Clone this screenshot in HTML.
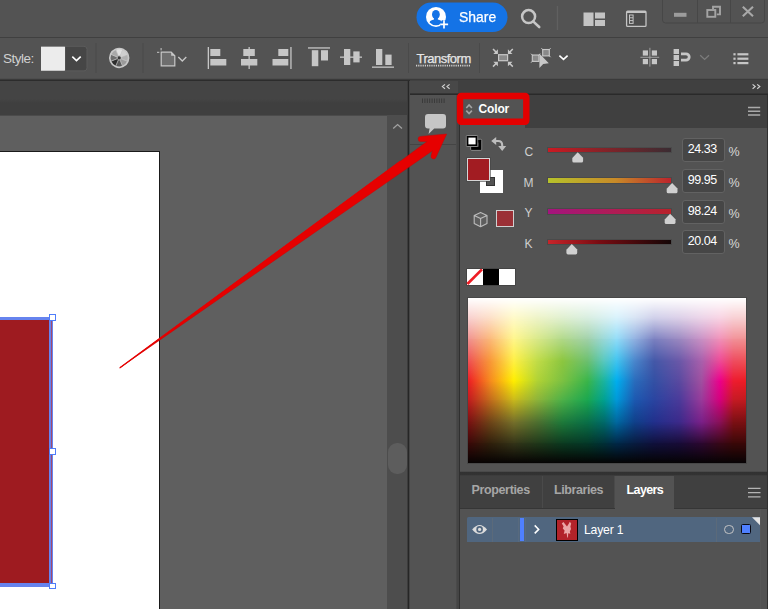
<!DOCTYPE html>
<html><head><meta charset="utf-8">
<style>
html,body{margin:0;padding:0;}
body{width:768px;height:609px;overflow:hidden;background:#535353;position:relative;font-family:"Liberation Sans",sans-serif;}
.a{position:absolute;}
.t{position:absolute;white-space:nowrap;line-height:1;}
svg{position:absolute;left:0;top:0;overflow:visible;}

.vb{left:682px;width:43px;height:24px;box-sizing:border-box;background:#464646;border:1px solid #626262;border-radius:3px;color:#fff;font-size:12.5px;letter-spacing:-.45px;line-height:21.2px;text-align:left;padding-left:4.7px;}
.pc{left:728.5px;font-size:12.5px;color:#d8d8d8;}
.hd{left:49px;width:7px;height:6.6px;box-sizing:border-box;background:#fff;border:1px solid #4f7dfa;}
</style></head><body>
<!-- top bars -->
<div class="a" style="left:0;top:0;width:768px;height:37px;background:#535353"></div>
<div class="a" style="left:0;top:37px;width:768px;height:1px;background:#404040"></div>
<div class="a" style="left:0;top:38px;width:768px;height:41px;background:#535353"></div>
<div class="a" style="left:0;top:78px;width:768px;height:3px;background:linear-gradient(180deg,#4d4d4d 0,#4d4d4d 1px,#3a3a3a 1px,#3a3a3a 2px,#2c2c2c 2px)"></div>
<!-- doc tab strip -->
<div class="a" style="left:0;top:81px;width:408px;height:34px;background:linear-gradient(180deg,#444 0,#444 18px,#3f3f3f 22px,#3f3f3f 100%)"></div>
<!-- canvas -->
<div class="a" style="left:0;top:115px;width:387px;height:2px;background:#4b4b4b"></div>
<div class="a" style="left:0;top:116.2px;width:387px;height:494px;background:#5f5f5f"></div>
<div class="a" style="left:0;top:151px;width:159px;height:458px;background:#fff;border-top:1px solid #1a1a1a;border-right:1px solid #1a1a1a;box-sizing:content-box"></div>
<div class="a" style="left:0;top:316.5px;width:53.2px;height:270.2px;background:#6683ee"></div>
<div class="a" style="left:0;top:320px;width:48.8px;height:263.2px;background:#9e1b20"></div>
<div class="a" style="left:51.3px;top:320px;width:.8px;height:263.2px;background:#a04a70"></div>
<div class="a hd" style="top:314px"></div>
<div class="a hd" style="top:448.2px"></div>
<div class="a hd" style="top:582.8px"></div>
<!-- scrollbar -->
<div class="a" style="left:387px;top:115px;width:21px;height:494px;background:#4d4d4d"></div>
<div class="a" style="left:388px;top:443px;width:18.5px;height:31px;border-radius:9px;background:#5d5d5d"></div>
<!-- separator -->
<div class="a" style="left:407px;top:81px;width:4px;height:528px;background:linear-gradient(90deg,#3c3c3c 0,#3c3c3c 1px,#262626 1px,#262626 2px,#444 2px,#444 3px,#4d4d4d 3px)"></div>
<!-- dock header -->
<div class="a" style="left:410px;top:80px;width:358px;height:13px;background:#404040"></div>
<div class="a" style="left:410px;top:80.5px;width:47.5px;height:12.5px;background:#484848"></div>
<div class="a" style="left:410px;top:93px;width:358px;height:2px;background:linear-gradient(180deg,#353535 0,#353535 1px,#2a2a2a 1px)"></div>
<!-- icon column -->
<div class="a" style="left:410px;top:95px;width:48px;height:514px;background:#535353"></div>
<div class="a" style="left:410px;top:144px;width:48px;height:1px;background:#454545"></div>
<div class="a" style="left:456px;top:95px;width:4px;height:514px;background:linear-gradient(90deg,#4a4a4a 0,#4a4a4a 1px,#454545 1px,#454545 3px,#303030 3px)"></div>
<!-- color panel -->
<div class="a" style="left:460px;top:95px;width:308px;height:32.6px;background:#404040"></div>
<div class="a" style="left:460px;top:128px;width:308px;height:343px;background:#535353"></div>
<div class="a" style="left:460px;top:96px;width:65px;height:32px;background:#535353"></div>
<div class="a" style="left:460px;top:471px;width:308px;height:5px;background:linear-gradient(180deg,#4a4a4a 0,#4a4a4a 1px,#313131 1px,#333 4px,#3c3c3c 4px)"></div>
<!-- layers panel -->
<div class="a" style="left:460px;top:476px;width:308px;height:32px;background:#404040"></div>
<div class="a" style="left:460px;top:508px;width:308px;height:1px;background:#363636"></div>
<div class="a" style="left:460px;top:509px;width:308px;height:100px;background:#535353"></div>
<div class="a" style="left:615px;top:476px;width:58.5px;height:33px;background:#535353"></div>
<div class="a" style="left:542px;top:476px;width:1px;height:32px;background:#4a4a4a"></div>
<div class="a" style="left:614px;top:476px;width:1px;height:32px;background:#4a4a4a"></div>
<div class="a" style="left:767px;top:95px;width:1px;height:514px;background:#303030"></div>
<!-- layer row -->
<div class="a" style="left:466.6px;top:516.8px;width:293.2px;height:24.8px;background:#50667f;border-radius:1.5px 0 0 0"></div>
<div class="a" style="left:492px;top:518px;width:1px;height:23.5px;background:#5b6a7a"></div>
<div class="a" style="left:518px;top:518px;width:1px;height:23.5px;background:#586a7e"></div>
<div class="a" style="left:525px;top:518px;width:1px;height:23.5px;background:#586a7e"></div>
<div class="a" style="left:716px;top:518px;width:1px;height:23.5px;background:#5b6a7a"></div>
<div class="a" style="left:520px;top:518px;width:4.4px;height:23px;background:#4f80ff"></div>
<div class="a" style="left:556px;top:519px;width:20px;height:20px;background:#b2232a;border:1px solid #000"></div>
<div class="a" style="left:741.4px;top:524.4px;width:8px;height:8px;background:#4f80ff;border:1px solid #0a0a14;border-radius:1.5px"></div>
<div class="a" style="left:724.4px;top:524.5px;width:7.4px;height:7.4px;border:1.5px solid #c4c4c4;border-radius:50%"></div>
<div class="a" style="left:760px;top:509px;width:1px;height:100px;background:#575757"></div>


<!-- color panel contents -->
<div class="a" style="left:479.5px;top:170px;width:23px;height:23.2px;background:#fff"></div>
<div class="a" style="left:486.2px;top:177px;width:9.2px;height:9.4px;background:#535353;border:1px solid #333;box-sizing:border-box"></div>
<div class="a" style="left:466.8px;top:157.8px;width:23.4px;height:23.2px;background:#a21c22;border:1px solid #d6d6d6;box-sizing:border-box;box-shadow:0 0 0 .6px #444"></div>
<div class="a" style="left:496.3px;top:209.9px;width:17.3px;height:17.5px;background:#9b3036;border:1px solid #d0d0d0;box-sizing:border-box"></div>
<!-- none/black/white -->
<div class="a" style="left:466.5px;top:268.7px;width:48.6px;height:15.9px;background:#fff;box-shadow:0 0 0 .6px #3a3a3a"></div>
<div class="a" style="left:482.6px;top:268.7px;width:16.4px;height:15.9px;background:#000"></div>

<!-- sliders -->
<div class="a" style="left:547.6px;top:147.8px;width:123.7px;height:4.7px;background:linear-gradient(90deg,#cc1a22,#8a2228 42%,#3a2c32);box-shadow:0 0 0 1px #4a4a4a"></div>
<div class="a" style="left:547.6px;top:178.3px;width:123.7px;height:4.7px;background:linear-gradient(90deg,#b6c22a,#c88a28 55%,#bc242c);box-shadow:0 0 0 1px #4a4a4a"></div>
<div class="a" style="left:547.6px;top:209px;width:123.7px;height:4.7px;background:linear-gradient(90deg,#a4147e,#b01c54 55%,#b8222a);box-shadow:0 0 0 1px #4a4a4a"></div>
<div class="a" style="left:547.6px;top:239.7px;width:123.7px;height:4.7px;background:linear-gradient(90deg,#c8242a,#780c12 42%,#140606);box-shadow:0 0 0 1px #4a4a4a"></div>
<!-- value boxes -->
<div class="a vb" style="top:138px">24.33</div>
<div class="a vb" style="top:169px">99.95</div>
<div class="a vb" style="top:200px">98.24</div>
<div class="a vb" style="top:230px">20.04</div>
<div class="t pc" style="top:146px">%</div>
<div class="t pc" style="top:177px">%</div>
<div class="t pc" style="top:207.5px">%</div>
<div class="t pc" style="top:238px">%</div>
<!-- spectrum -->
<div class="a" style="left:467px;top:297px;width:280px;height:167px;background:#474747"></div>
<div class="a" id="spec" style="left:468px;top:298px;width:278px;height:165px;overflow:hidden;background:#000">
<div class="a" style="left:0;top:0.00px;width:278px;height:20.30px;background:linear-gradient(90deg,#fff,#fff)"><div class="a" style="left:0;top:0;width:278px;height:100%;background:linear-gradient(90deg,#f8d0d0 0%,#fde0c8 8%,#fffac8 16.5%,#eef4c8 25%,#e0f0d0 34%,#d8eee0 43%,#d8f0f0 49%,#d8f2fc 53.5%,#d8e4f4 60%,#d0d0ea 67%,#dcd0e8 76%,#ecd4e8 84%,#f8d4e4 90.6%,#f8d0d4 95.5%,#f8d0d0 100%);-webkit-mask-image:linear-gradient(180deg,rgba(0,0,0,0),#000);mask-image:linear-gradient(180deg,rgba(0,0,0,0),#000)"></div></div>
<div class="a" style="left:0;top:19.80px;width:278px;height:21.95px;background:linear-gradient(90deg,#f8d0d0 0%,#fde0c8 8%,#fffac8 16.5%,#eef4c8 25%,#e0f0d0 34%,#d8eee0 43%,#d8f0f0 49%,#d8f2fc 53.5%,#d8e4f4 60%,#d0d0ea 67%,#dcd0e8 76%,#ecd4e8 84%,#f8d4e4 90.6%,#f8d0d4 95.5%,#f8d0d0 100%)"><div class="a" style="left:0;top:0;width:278px;height:100%;background:linear-gradient(90deg,#f09090 0%,#fbb878 8%,#fff68a 16.5%,#d8e888 25%,#b0d888 34%,#a0d0a8 43%,#98d8d8 49%,#90dcf8 53.5%,#90b0e0 60%,#7a80c0 67%,#9a88c0 76%,#c890c4 84%,#f090b8 90.6%,#f29098 95.5%,#f09090 100%);-webkit-mask-image:linear-gradient(180deg,rgba(0,0,0,0),#000);mask-image:linear-gradient(180deg,rgba(0,0,0,0),#000)"></div></div>
<div class="a" style="left:0;top:41.25px;width:278px;height:21.95px;background:linear-gradient(90deg,#f09090 0%,#fbb878 8%,#fff68a 16.5%,#d8e888 25%,#b0d888 34%,#a0d0a8 43%,#98d8d8 49%,#90dcf8 53.5%,#90b0e0 60%,#7a80c0 67%,#9a88c0 76%,#c890c4 84%,#f090b8 90.6%,#f29098 95.5%,#f09090 100%)"><div class="a" style="left:0;top:0;width:278px;height:100%;background:linear-gradient(90deg,#ee5055 0%,#f89838 8%,#fff044 16.5%,#c0dc48 25%,#8cc63f 34%,#6cc070 43%,#58c8c0 49%,#40c4f0 53.5%,#4a86cc 60%,#4458a8 67%,#6a58a8 76%,#a860ac 84%,#ee4a98 90.6%,#ee4c60 95.5%,#ee5055 100%);-webkit-mask-image:linear-gradient(180deg,rgba(0,0,0,0),#000);mask-image:linear-gradient(180deg,rgba(0,0,0,0),#000)"></div></div>
<div class="a" style="left:0;top:62.70px;width:278px;height:20.30px;background:linear-gradient(90deg,#ee5055 0%,#f89838 8%,#fff044 16.5%,#c0dc48 25%,#8cc63f 34%,#6cc070 43%,#58c8c0 49%,#40c4f0 53.5%,#4a86cc 60%,#4458a8 67%,#6a58a8 76%,#a860ac 84%,#ee4a98 90.6%,#ee4c60 95.5%,#ee5055 100%)"><div class="a" style="left:0;top:0;width:278px;height:100%;background:linear-gradient(90deg,#ed1c24 0%,#f68a1e 8%,#ffee00 16.5%,#b0d235 25%,#7cc142 34%,#3ab54a 43%,#1ab4a0 49%,#00aeef 53.5%,#2a6cbc 60%,#3450a4 67%,#5a4aa0 76%,#a050a0 84%,#ec008c 90.6%,#ed1c30 95.5%,#ed1c24 100%);-webkit-mask-image:linear-gradient(180deg,rgba(0,0,0,0),#000);mask-image:linear-gradient(180deg,rgba(0,0,0,0),#000)"></div></div>
<div class="a" style="left:0;top:82.50px;width:278px;height:20.30px;background:linear-gradient(90deg,#ed1c24 0%,#f68a1e 8%,#ffee00 16.5%,#b0d235 25%,#7cc142 34%,#3ab54a 43%,#1ab4a0 49%,#00aeef 53.5%,#2a6cbc 60%,#3450a4 67%,#5a4aa0 76%,#a050a0 84%,#ec008c 90.6%,#ed1c30 95.5%,#ed1c24 100%)"><div class="a" style="left:0;top:0;width:278px;height:100%;background:linear-gradient(90deg,#c01a1e 0%,#c06a1c 8%,#c8b81c 16.5%,#8cb23a 25%,#4cb048 34%,#1aa650 43%,#00a090 49%,#0098d8 53.5%,#1c58b0 60%,#2a44a0 67%,#4a3a9a 76%,#983a9a 84%,#d4007c 90.6%,#c41a24 95.5%,#c01a1e 100%);-webkit-mask-image:linear-gradient(180deg,rgba(0,0,0,0),#000);mask-image:linear-gradient(180deg,rgba(0,0,0,0),#000)"></div></div>
<div class="a" style="left:0;top:102.30px;width:278px;height:21.95px;background:linear-gradient(90deg,#c01a1e 0%,#c06a1c 8%,#c8b81c 16.5%,#8cb23a 25%,#4cb048 34%,#1aa650 43%,#00a090 49%,#0098d8 53.5%,#1c58b0 60%,#2a44a0 67%,#4a3a9a 76%,#983a9a 84%,#d4007c 90.6%,#c41a24 95.5%,#c01a1e 100%)"><div class="a" style="left:0;top:0;width:278px;height:100%;background:linear-gradient(90deg,#7a1012 0%,#6e4418 8%,#76702a 16.5%,#4e7030 25%,#1e7a3a 34%,#0a7048 43%,#006a6a 49%,#0068a0 53.5%,#10408a 60%,#22308c 67%,#3c2a8a 76%,#7a2088 84%,#8a1058 90.6%,#7c1014 95.5%,#7a1012 100%);-webkit-mask-image:linear-gradient(180deg,rgba(0,0,0,0),#000);mask-image:linear-gradient(180deg,rgba(0,0,0,0),#000)"></div></div>
<div class="a" style="left:0;top:123.75px;width:278px;height:21.95px;background:linear-gradient(90deg,#7a1012 0%,#6e4418 8%,#76702a 16.5%,#4e7030 25%,#1e7a3a 34%,#0a7048 43%,#006a6a 49%,#0068a0 53.5%,#10408a 60%,#22308c 67%,#3c2a8a 76%,#7a2088 84%,#8a1058 90.6%,#7c1014 95.5%,#7a1012 100%)"><div class="a" style="left:0;top:0;width:278px;height:100%;background:linear-gradient(90deg,#3a0808 0%,#30200c 8%,#343418 16.5%,#20381a 25%,#0c3a20 34%,#043828 43%,#003038 49%,#002848 53.5%,#081c40 60%,#10103c 67%,#180c38 76%,#2c0830 84%,#380818 90.6%,#3a0808 95.5%,#3a0808 100%);-webkit-mask-image:linear-gradient(180deg,rgba(0,0,0,0),#000);mask-image:linear-gradient(180deg,rgba(0,0,0,0),#000)"></div></div>
<div class="a" style="left:0;top:145.20px;width:278px;height:20.30px;background:linear-gradient(90deg,#3a0808 0%,#30200c 8%,#343418 16.5%,#20381a 25%,#0c3a20 34%,#043828 43%,#003038 49%,#002848 53.5%,#081c40 60%,#10103c 67%,#180c38 76%,#2c0830 84%,#380818 90.6%,#3a0808 95.5%,#3a0808 100%)"><div class="a" style="left:0;top:0;width:278px;height:100%;background:linear-gradient(90deg,#070303,#040404 50%,#070305);-webkit-mask-image:linear-gradient(180deg,rgba(0,0,0,0),#000);mask-image:linear-gradient(180deg,rgba(0,0,0,0),#000)"></div></div>
</div>

<!-- ICONS -->
<svg width="768" height="609" viewBox="0 0 768 609" style="z-index:4">
<!-- share button -->
<rect x="416.5" y="2.5" width="91" height="29.5" rx="14.75" fill="#1473e6"/>
<circle cx="436" cy="16.9" r="10" fill="#fff"/>
<ellipse cx="435.9" cy="14.5" rx="3.9" ry="4.6" fill="#1473e6"/>
<path d="M429.6 22.6 C429.8 20.8 432 20.2 434 19.6 V17.5 H437.8 V19.6 C439.8 20.2 442 20.8 442.2 22.6 A8.7 8.7 0 0 1 429.6 22.6 Z" fill="#1473e6"/>
<path d="M440.2 24.4 H448.1 M444 20.2 V28.6" stroke="#1473e6" stroke-width="4.6" fill="none"/>
<path d="M440.2 24.4 H448.1 M444 20.2 V28.6" stroke="#fff" stroke-width="1.7" fill="none"/>
<!-- search -->
<circle cx="528.6" cy="16.6" r="6.5" fill="none" stroke="#c6c6c6" stroke-width="2.5"/>
<path d="M533.4 21.6 L539.2 27" stroke="#c6c6c6" stroke-width="2.6" stroke-linecap="round"/>
<rect x="556.8" y="6" width="1.3" height="24" fill="#606060"/>
<!-- workspace icon -->
<rect x="583.5" y="12.5" width="10" height="13.5" fill="#c4c4c4"/>
<rect x="595" y="12.5" width="10" height="6" fill="#c4c4c4"/>
<rect x="595" y="20" width="10" height="6" fill="#c4c4c4"/>
<!-- window icon -->
<rect x="626.6" y="11.2" width="19.4" height="15.2" rx="1" fill="#4d4d4d" stroke="#c4c4c4" stroke-width="1.3"/>
<rect x="627" y="11" width="19" height="2" fill="#c4c4c4"/>
<rect x="629.5" y="15" width="3.6" height="8.4" fill="none" stroke="#c4c4c4" stroke-width="1"/>
<path d="M629.5 17.8 H633 M629.5 20.6 H633" stroke="#c4c4c4" stroke-width="1"/>
<!-- window controls -->
<rect x="662.5" y="-5" width="102" height="28" rx="3" fill="none" stroke="#474747" stroke-width="1"/>
<path d="M697.5 0 V23 M730.5 0 V23" stroke="#474747" stroke-width="1"/>
<rect x="674" y="12.8" width="12.5" height="4" fill="#9c9c9c"/>
<path d="M713 9.2 V6.8 H720 V14.4 H716.8" fill="none" stroke="#a4a4a4" stroke-width="1.9"/>
<rect x="707.3" y="10" width="8" height="6.8" fill="none" stroke="#a4a4a4" stroke-width="1.9"/>
<path d="M742.8 6.8 L753 16.2 M753 6.8 L742.8 16.2" stroke="#a8a8a8" stroke-width="2.1" fill="none"/>

<!-- control bar: style -->
<rect x="41" y="46.8" width="24" height="23.7" fill="#ececec"/>
<path d="M65 46.3 H84 Q87 46.3 87 49.3 V67.9 Q87 70.9 84 70.9 H65 Z" fill="#464646" stroke="#5c5c5c" stroke-width="1"/>
<rect x="41" y="46.8" width="24" height="23.7" fill="#ececec"/>
<path d="M72.3 56.6 L76.5 60.6 L80.7 56.6" fill="none" stroke="#fff" stroke-width="1.6"/>
<rect x="95.5" y="43" width="1" height="30" fill="#4a4a4a"/>
<rect x="142.5" y="43" width="1" height="30" fill="#4a4a4a"/>
<rect x="408" y="43" width="1" height="30" fill="#4a4a4a"/>
<rect x="479" y="43" width="1" height="30" fill="#4a4a4a"/>
<!-- color wheel -->
<g transform="translate(119.2 57.9) rotate(-22)">
<circle r="9.4" fill="#8a8a8a"/>
<path d="M0 0 L0 -9.4 A9.4 9.4 0 0 1 6.6 -6.6 Z" fill="#e0e0e0"/>
<path d="M0 0 L6.6 -6.6 A9.4 9.4 0 0 1 9.4 0 Z" fill="#cfcfcf"/>
<path d="M0 0 L9.4 0 A9.4 9.4 0 0 1 6.6 6.6 Z" fill="#b0b0b0"/>
<path d="M0 0 L6.6 6.6 A9.4 9.4 0 0 1 0 9.4 Z" fill="#9a9a9a"/>
<path d="M0 0 L0 9.4 A9.4 9.4 0 0 1 -6.6 6.6 Z" fill="#5a5a5a"/>
<path d="M0 0 L-6.6 6.6 A9.4 9.4 0 0 1 -9.4 0 Z" fill="#2e2e2e"/>
<path d="M0 0 L-9.4 0 A9.4 9.4 0 0 1 -6.6 -6.6 Z" fill="#6e6e6e"/>
<path d="M0 0 L-6.6 -6.6 A9.4 9.4 0 0 1 0 -9.4 Z" fill="#a8a8a8"/>
<path d="M0 -9.4 V9.4 M-9.4 0 H9.4 M-6.6 -6.6 L6.6 6.6 M6.6 -6.6 L-6.6 6.6" stroke="#d0d0d0" stroke-width=".6"/>
<circle r="9.4" fill="none" stroke="#c8c8c8" stroke-width="1.6"/>
<circle r="2" fill="#3a3a3a" stroke="#d0d0d0" stroke-width=".6"/>
</g>
<!-- artboard doc icon -->
<path d="M161.2 52.2 H171.2 L174.8 55.8 V65.8 H161.2 Z" fill="#6e6e6e" stroke="#c8c8c8" stroke-width="1.2"/>
<path d="M171.2 52.2 V55.8 H174.8 Z" fill="#c8c8c8"/>
<path d="M157 52.3 H159.3 M161.1 48 V50.4" stroke="#c8c8c8" stroke-width="1"/>
<path d="M178.3 57 L182.3 61 L186.3 57" fill="none" stroke="#c8c8c8" stroke-width="1.3"/>
<!-- align icons -->
<g fill="#c6c6c6">
<rect x="207.7" y="47" width="1.3" height="22"/><rect x="210.3" y="49" width="10" height="7"/><rect x="210.3" y="59" width="16" height="6.5"/>
<rect x="248.5" y="47" width="1.3" height="22"/><rect x="243.3" y="49" width="11.5" height="7"/><rect x="241" y="59" width="16.3" height="6.5"/>
<rect x="290.3" y="47" width="1.3" height="22"/><rect x="278.3" y="49" width="10" height="7"/><rect x="272.5" y="59" width="15.8" height="6.5"/>
<rect x="308" y="47.3" width="22" height="1.3"/><rect x="311.8" y="50.2" width="6.5" height="16"/><rect x="321" y="50.2" width="7" height="10.3"/>
<rect x="340" y="56.5" width="22" height="1.3"/><rect x="344" y="49" width="6.3" height="16"/><rect x="353.3" y="51.4" width="6.3" height="11"/>
<rect x="372" y="66.5" width="22" height="1.3"/><rect x="376" y="49" width="6.3" height="16"/><rect x="385.3" y="54.6" width="6.3" height="10.4"/>
</g>
<!-- transform underline -->
<path d="M416 65.6 H470.5" stroke="#cfcfcf" stroke-width="1.6" stroke-dasharray="1.2 1"/>
<!-- isolate icon -->
<rect x="498.6" y="54.7" width="9" height="6" fill="#8a8a8a" stroke="#c8c8c8" stroke-width="1.2"/>
<g stroke="#c8c8c8" stroke-width="1.5" fill="#c8c8c8">
<path d="M493 49 L496.6 52.6 M509.2 52.6 L512.8 49 M493 66.6 L496.6 63 M509.2 63 L512.8 66.6" fill="none"/>
<path d="M497.9 53.9 V49.3 L493.3 53.9 Z M507.9 53.9 V49.3 L512.5 53.9 Z M497.9 61.7 V66.3 L493.3 61.7 Z M507.9 61.7 V66.3 L512.5 61.7 Z" stroke="none"/>
</g>
<!-- select similar icon -->
<rect x="532.3" y="55" width="6.6" height="6.4" fill="#8a8a8a" stroke="#c8c8c8" stroke-width="1.1"/>
<rect x="542.7" y="49.5" width="6.6" height="6.4" fill="#8a8a8a" stroke="#c8c8c8" stroke-width="1.1"/>
<path d="M531 53.7 L533 55.7 M540.2 53.7 L538.2 55.7 M531 62.7 L533 60.7 M541.4 48.2 L543.4 50.2 M550.6 48.2 L548.6 50.2 M550.6 57.2 L548.6 55.2" stroke="#c8c8c8" stroke-width="1"/>
<path d="M539.4 53.6 V68 L543.2 64 L548.8 63.2 Z" fill="#c8c8c8"/>
<path d="M559.4 55.6 L563.5 59.4 L567.6 55.6" fill="none" stroke="#fff" stroke-width="1.6"/>
<!-- grid icon -->
<g fill="#c6c6c6">
<rect x="642.8" y="50.4" width="5.2" height="5.2"/><rect x="651.8" y="50.4" width="5.2" height="5.2"/>
<rect x="642.8" y="59" width="5.2" height="5.2"/><rect x="651.8" y="59" width="5.2" height="5.2"/>
<rect x="640.4" y="56.8" width="18.8" height="1" fill="#a0a0a0"/><rect x="649.4" y="47.8" width="1" height="18.8" fill="#a0a0a0"/>
</g>
<!-- magnet icon -->
<g fill="#c6c6c6">
<rect x="673.6" y="49" width="5.4" height="5"/><rect x="673.6" y="55" width="5.4" height="5"/><rect x="673.6" y="61" width="5.4" height="5"/>
</g>
<path d="M681 53.8 H686 A3.2 3.2 0 0 1 686 60.2 H681" fill="none" stroke="#c6c6c6" stroke-width="2.8"/>
<path d="M700.2 55.2 L704.6 59.4 L709 55.2" fill="none" stroke="#7c7c7c" stroke-width="1.3"/>
<!-- list icon -->
<g fill="#c6c6c6">
<rect x="733.4" y="53.2" width="2.2" height="2.2"/><rect x="737.4" y="53.2" width="11" height="2.2"/>
<rect x="733.4" y="57.6" width="2.2" height="2.2"/><rect x="737.4" y="57.6" width="11" height="2.2"/>
<rect x="733.4" y="62" width="2.2" height="2.2"/><rect x="737.4" y="62" width="11" height="2.2"/>
</g>

<!-- dock header chevrons -->
<path d="M445 84.4 L442.4 86.6 L445 88.8 M449.6 84.4 L447 86.6 L449.6 88.8" fill="none" stroke="#d0d0d0" stroke-width="1.2"/>
<path d="M752.6 84.4 L755.2 86.6 L752.6 88.8 M757.2 84.4 L759.8 86.6 L757.2 88.8" fill="none" stroke="#d0d0d0" stroke-width="1.2"/>
<!-- grip -->
<path d="M422.5 98.5 V103 M424.9 98.5 V103 M427.3 98.5 V103 M429.7 98.5 V103 M432.1 98.5 V103 M434.5 98.5 V103 M436.9 98.5 V103 M439.3 98.5 V103 M441.7 98.5 V103 M444.1 98.5 V103" stroke="#3a3a3a" stroke-width="1"/>
<!-- chat bubble -->
<path d="M428 114 H443 Q446 114 446 117 V125.5 Q446 128.5 443 128.5 H434.2 L428.6 134 L429.6 128.5 H428 Q425 128.5 425 125.5 V117 Q425 114 428 114 Z" fill="#c6c6c6"/>
<!-- scrollbar arrow -->
<path d="M393.2 128.6 L397.6 124.6 L402 128.6" fill="none" stroke="#a0a0a0" stroke-width="1.3"/>
<!-- color tab arrows -->
<path d="M466.3 108 L469.1 105 L471.9 108 M466.3 110.6 L469.1 113.6 L471.9 110.6" fill="none" stroke="#a4a4a4" stroke-width="1.6"/>
<!-- hamburgers -->
<path d="M748 107.5 H760.2 M748 111.3 H760.2 M748 115 H760.2" stroke="#aaa" stroke-width="1.5"/>
<path d="M748 488.4 H760.5 M748 492.6 H760.5 M748 496.8 H760.5" stroke="#b4b4b4" stroke-width="1.3"/>
<!-- default fill/stroke mini icon -->
<rect x="470.7" y="139.3" width="11" height="11" rx="1" fill="none" stroke="#8a8a8a" stroke-width="1"/>
<rect x="471.2" y="139.8" width="10" height="10" fill="#000"/>
<rect x="474" y="142.6" width="4.4" height="4.4" fill="#666"/>
<rect x="466.3" y="135.5" width="11.4" height="11" rx="1" fill="none" stroke="#8a8a8a" stroke-width="1"/>
<rect x="467.6" y="136.8" width="8.8" height="8.4" fill="#fff" stroke="#000" stroke-width="1.6"/>
<!-- swap arrow -->
<path d="M495 141 H498 Q502.2 141 502.2 145.2 V147" fill="none" stroke="#bdbdbd" stroke-width="2.1"/>
<path d="M491.2 141 L496.2 137 V145 Z M502.2 151 L498.2 146 H506.2 Z" fill="#bdbdbd"/>
<!-- cube -->
<path d="M480.6 212.4 L487 215.4 V223.4 L480.6 226.8 L474.2 223.4 V215.4 Z" fill="#5e5e5e" stroke="none"/><path d="M480.6 212.4 L487 215.4 V223.4 L480.6 226.8 L474.2 223.4 V215.4 Z M474.2 215.4 L480.6 218.6 L487 215.4 M480.6 218.6 V226.8" fill="none" stroke="#bcbcbc" stroke-width="1.1" stroke-linejoin="round"/>
<!-- none slash -->
<path d="M467.4 284 L482 269.4" stroke="#ee1c24" stroke-width="2.7"/>
<!-- slider handles -->
<g fill="#d0d0d0" transform="translate(.5 0)">
<path d="M577.2 152.3 L582.6 157.8 V161 Q582.6 162.6 581 162.6 H573.4 Q571.8 162.6 571.8 161 V158 Z"/>
<path transform="translate(94.4 30.7)" d="M577.2 152.3 L582.6 157.8 V161 Q582.6 162.6 581 162.6 H573.4 Q571.8 162.6 571.8 161 V158 Z"/>
<path transform="translate(92.4 61.4)" d="M577.2 152.3 L582.6 157.8 V161 Q582.6 162.6 581 162.6 H573.4 Q571.8 162.6 571.8 161 V158 Z"/>
<path transform="translate(-5.9 91.8)" d="M577.2 152.3 L582.6 157.8 V161 Q582.6 162.6 581 162.6 H573.4 Q571.8 162.6 571.8 161 V158 Z"/>
</g>
<!-- layer row icons -->
<path d="M472.2 529.4 Q479.6 520.4 487 529.4 Q479.6 538.4 472.2 529.4 Z" fill="#dcdcdc"/>
<circle cx="479.6" cy="529.4" r="3.3" fill="#50667f"/>
<circle cx="479.6" cy="529.4" r="1.6" fill="#dcdcdc"/>
<path d="M534.7 525.4 L538.7 529.4 L534.7 533.4" fill="none" stroke="#fff" stroke-width="1.5"/>
<path d="M752 517.2 H760 V525.2 Z" fill="#e4e4e4"/>
<!-- thumbnail figure -->
<path d="M567.3 537.6 L566.6 533 L563.8 534 L564.6 530.6 L562.8 528.6 L563.6 526.2 L561.8 523.4 L563.4 522 L565.4 524.6 L567 526.6 L568.6 524 L569.8 521.8 L571.2 523.6 L570.4 526.6 L571 529 L569.8 531.4 L570.4 533.8 L568.2 533.2 L568 537.6 Z" fill="#eba6a6"/>

<!-- red highlight box -->
<rect x="460" y="96" width="66.3" height="25.8" rx="1.2" fill="none" stroke="#e30000" stroke-width="6.4"/>
<!-- arrow -->
<path d="M446.6 134 L420.7 136.4 A2.55 2.55 0 0 0 420.7 141.5 L427.1 141.5 L119.7 367.9 L432.4 150.8 L431.1 155.8 A2.55 2.55 0 0 0 436 157.2 Z" fill="#e60000" stroke="#d00000" stroke-width=".5" stroke-linejoin="round"/>
<path d="M120.3 367.5 L400 161.5" stroke="#e60000" stroke-width="1.4" stroke-linecap="round"/>
</svg>

<!-- texts -->
<div class="t" id="tstyle" style="left:3px;top:52px;font-size:13.5px;letter-spacing:-.5px;color:#d0d0d0">Style:</div>
<div class="t" id="tshare" style="left:458.6px;top:10.4px;font-size:14.6px;transform:scaleX(.955);transform-origin:0 0;-webkit-text-stroke:.25px #fff;color:#fff;z-index:5">Share</div>
<div class="t" id="ttrans" style="left:416.5px;top:52px;font-size:13px;letter-spacing:-.5px;-webkit-text-stroke:.25px #e6e6e6;color:#e6e6e6">Transform</div>
<div class="t" id="tcolor" style="left:478.5px;top:103px;font-size:12px;letter-spacing:-.15px;font-weight:bold;color:#fff;z-index:5">Color</div>
<div class="t" id="tprop" style="left:471.5px;top:484px;font-size:12.5px;letter-spacing:-.36px;font-weight:bold;color:#a6a6a6">Properties</div>
<div class="t" id="tlib" style="left:554px;top:484px;font-size:12.5px;letter-spacing:-.42px;font-weight:bold;color:#a6a6a6">Libraries</div>
<div class="t" id="tlay" style="left:626.5px;top:484px;font-size:12.5px;letter-spacing:-.6px;font-weight:bold;color:#fff">Layers</div>
<div class="t" id="tlayer1" style="left:584px;top:524.3px;font-size:12.2px;letter-spacing:-.2px;color:#fff">Layer 1</div>
<div class="t" style="left:524.5px;top:146px;font-size:12px;color:#cfcfcf">C</div>
<div class="t" style="left:523.5px;top:177px;font-size:12px;color:#cfcfcf">M</div>
<div class="t" style="left:524.5px;top:207px;font-size:12px;color:#cfcfcf">Y</div>
<div class="t" style="left:524.5px;top:238px;font-size:12px;color:#cfcfcf">K</div>
</body></html>
